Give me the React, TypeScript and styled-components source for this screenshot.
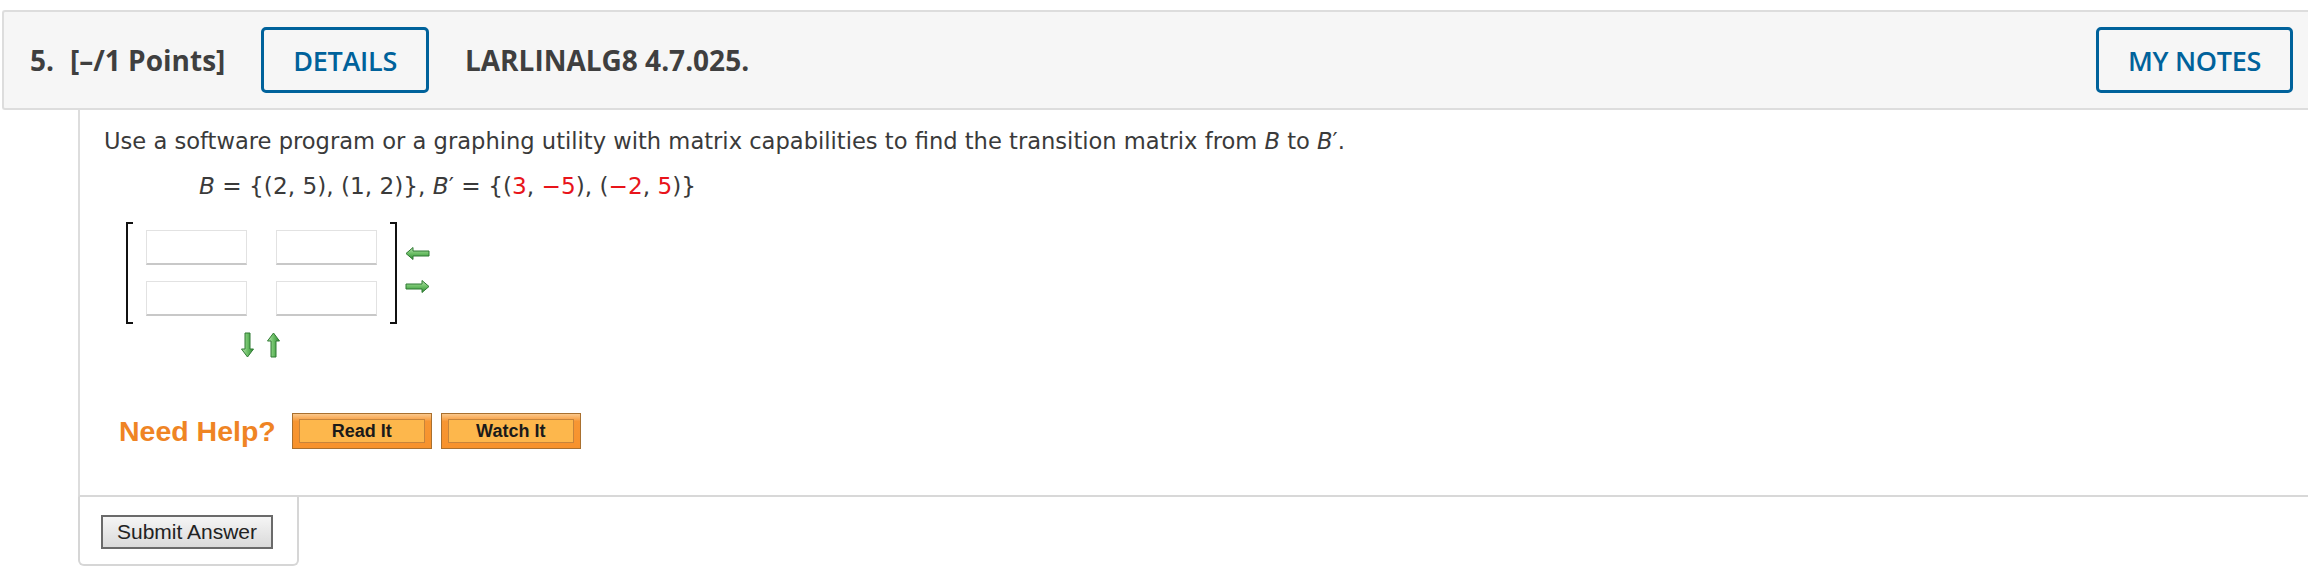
import styled, { createGlobalStyle } from "styled-components";

const GlobalStyle = createGlobalStyle`
  html, body {
    margin: 0;
    padding: 0;
    background: #ffffff;
  }
  body {
    font-family: "DejaVu Sans", Verdana, sans-serif;
  }
`;

const ArrowSide = ({ dir }: { dir: "left" | "right" }) => (
  <svg width="25" height="15" viewBox="0 0 25 15">
    <defs>
      <linearGradient id={`gs-${dir}`} x1="0" y1="0" x2="0" y2="1">
        <stop offset="0" stopColor="#b8e3b0" />
        <stop offset="0.5" stopColor="#6cbf66" />
        <stop offset="1" stopColor="#2f8a35" />
      </linearGradient>
    </defs>
    <path
      d="M1 7.5 L8 1.5 L8 5 L24 5 L24 10 L8 10 L8 13.5 Z"
      fill={`url(#gs-${dir})`}
      stroke="#2f7a32"
      strokeWidth="1"
      strokeLinejoin="round"
      transform={dir === "right" ? "translate(25 0) scale(-1 1)" : undefined}
    />
  </svg>
);

const ArrowVert = ({ dir }: { dir: "up" | "down" }) => (
  <svg width="15" height="26" viewBox="0 0 15 26">
    <defs>
      <linearGradient id={`gv-${dir}`} x1="0" y1="0" x2="1" y2="0">
        <stop offset="0" stopColor="#b8e3b0" />
        <stop offset="0.5" stopColor="#6cbf66" />
        <stop offset="1" stopColor="#2f8a35" />
      </linearGradient>
    </defs>
    <path
      d="M7.5 25 L1.5 17 L5 17 L5 1 L10 1 L10 17 L13.5 17 Z"
      fill={`url(#gv-${dir})`}
      stroke="#2f7a32"
      strokeWidth="1"
      strokeLinejoin="round"
      transform={dir === "up" ? "translate(0 26) scale(1 -1)" : undefined}
    />
  </svg>
);

const App = () => {
  return (
    <Page>
      <GlobalStyle />
      <Header>
        <QuestionNo>
          5.<Gap />[–/1 Points]
        </QuestionNo>
        <OutlineButton>DETAILS</OutlineButton>
        <QuestionId>LARLINALG8 4.7.025.</QuestionId>
        <Spacer />
        <OutlineButton>MY NOTES</OutlineButton>
      </Header>

      <Body>
        <Prompt>
          Use a software program or a graphing utility with matrix capabilities to find the transition
          matrix from <i>B</i> to <i>B</i>′.
        </Prompt>
        <Formula>
          <i>B</i> = {"{"}(2, 5), (1, 2){"}"}, <i>B</i>′ = {"{"}(<Red>3</Red>, <Red>−5</Red>), (
          <Red>−2</Red>, <Red>5</Red>){"}"}
        </Formula>

        <MatrixBlock>
          <MatrixRow>
            <Bracket side="left" />
            <Cells>
              <Cell />
              <Cell />
              <Cell />
              <Cell />
            </Cells>
            <Bracket side="right" />
            <SideArrows>
              <ArrowSide dir="left" />
              <ArrowSide dir="right" />
            </SideArrows>
          </MatrixRow>
          <VertArrows>
            <ArrowVert dir="down" />
            <ArrowVert dir="up" />
          </VertArrows>
        </MatrixBlock>

        <HelpRow>
          <HelpLabel>Need Help?</HelpLabel>
          <HelpButton>
            <span>Read It</span>
          </HelpButton>
          <HelpButton>
            <span>Watch It</span>
          </HelpButton>
        </HelpRow>
      </Body>

      <SubmitBox>
        <SubmitButton>Submit Answer</SubmitButton>
      </SubmitBox>
    </Page>
  );
};

const Page = styled.div`
  padding: 10px 0 0 2px;
`;

const Header = styled.div`
  display: flex;
  align-items: center;
  height: 96px;
  padding: 0 15px 0 26px;
  background: #f6f6f6;
  border: 2px solid #dddddd;
  border-right: none;
  border-radius: 3px 0 0 3px;
  font-family: "Open Sans", sans-serif;
  font-weight: 700;
  color: #3f3f3f;
`;

const QuestionNo = styled.div`
  font-size: 28px;
  margin-right: 36px;
`;

const Gap = styled.span`
  display: inline-block;
  width: 16px;
`;

const QuestionId = styled.div`
  font-size: 28px;
  margin-left: 36px;
`;

const Spacer = styled.div`
  flex: 1;
`;

const OutlineButton = styled.div`
  display: flex;
  align-items: center;
  justify-content: center;
  box-sizing: border-box;
  height: 66px;
  padding: 0 29px;
  border: 3px solid #00629b;
  border-radius: 5px;
  color: #00629b;
  font-size: 27px;
  font-weight: 600;
  letter-spacing: -0.3px;
`;

const Body = styled.div`
  margin-left: 76px;
  padding: 17px 0 46px 24px;
  border-left: 2px solid #dddddd;
  border-bottom: 2px solid #d8d8d8;
  color: #3a3a3a;
`;

const Prompt = styled.p`
  margin: 0;
  font-size: 22.6px;
  line-height: 28px;
`;

const Formula = styled.p`
  margin: 17px 0 0 95px;
  font-size: 23.2px;
  line-height: 28px;
`;

const Red = styled.span`
  color: #e8141a;
`;

const MatrixBlock = styled.div`
  display: inline-flex;
  flex-direction: column;
  margin: 22px 0 0 22px;
`;

const MatrixRow = styled.div`
  display: flex;
  align-items: center;
`;

const Bracket = styled.div<{ side: "left" | "right" }>`
  width: 5px;
  height: 98px;
  border: 2px solid #111111;
  ${(p) => (p.side === "left" ? "border-right: none;" : "border-left: none;")}
`;

const Cells = styled.div`
  display: grid;
  grid-template-columns: 101px 101px;
  column-gap: 29px;
  row-gap: 16px;
  margin: 0 13px 0 13px;
`;

const Cell = styled.div`
  box-sizing: border-box;
  height: 35px;
  background: #ffffff;
  border: 1px solid #e2e2e2;
  border-bottom: 2px solid #c8c8c8;
`;

const SideArrows = styled.div`
  display: flex;
  flex-direction: column;
  gap: 18px;
  margin-left: 8px;
  margin-top: -6px;
`;

const VertArrows = styled.div`
  display: flex;
  justify-content: center;
  gap: 11px;
  margin-top: 8px;
  padding-right: 36px;
`;

const HelpRow = styled.div`
  display: flex;
  align-items: center;
  margin: 55px 0 0 15px;
`;

const HelpLabel = styled.span`
  font-family: "Liberation Sans", Arial, sans-serif;
  font-weight: 700;
  font-size: 28.5px;
  color: #ef8424;
  margin-right: 16px;
`;

const HelpButton = styled.div`
  box-sizing: border-box;
  width: 140px;
  height: 36px;
  margin-right: 9px;
  padding: 5px 6px;
  background: linear-gradient(#fbc88c 0%, #f79633 22%, #f7922c 100%);
  border: 1px solid #a9702f;

  span {
    display: flex;
    align-items: center;
    justify-content: center;
    box-sizing: border-box;
    height: 100%;
    background: #fdb74c;
    border: 1px solid #c7843a;
    font-family: "Liberation Sans", Arial, sans-serif;
    font-weight: 700;
    font-size: 18px;
    color: #1a1a1a;
  }
`;

const SubmitBox = styled.div`
  box-sizing: border-box;
  margin-left: 76px;
  width: 221px;
  height: 69px;
  padding: 18px 0 0 21px;
  border: 2px solid #d6d6d6;
  border-top: none;
  border-radius: 0 0 6px 6px;
`;

const SubmitButton = styled.button`
  box-sizing: border-box;
  width: 172px;
  height: 34px;
  padding: 0;
  background: linear-gradient(#f5f5f5, #dadada);
  border: 2px solid #6a6a6a;
  font-family: "Liberation Sans", Arial, sans-serif;
  font-size: 21px;
  color: #222222;
`;

export default App;
